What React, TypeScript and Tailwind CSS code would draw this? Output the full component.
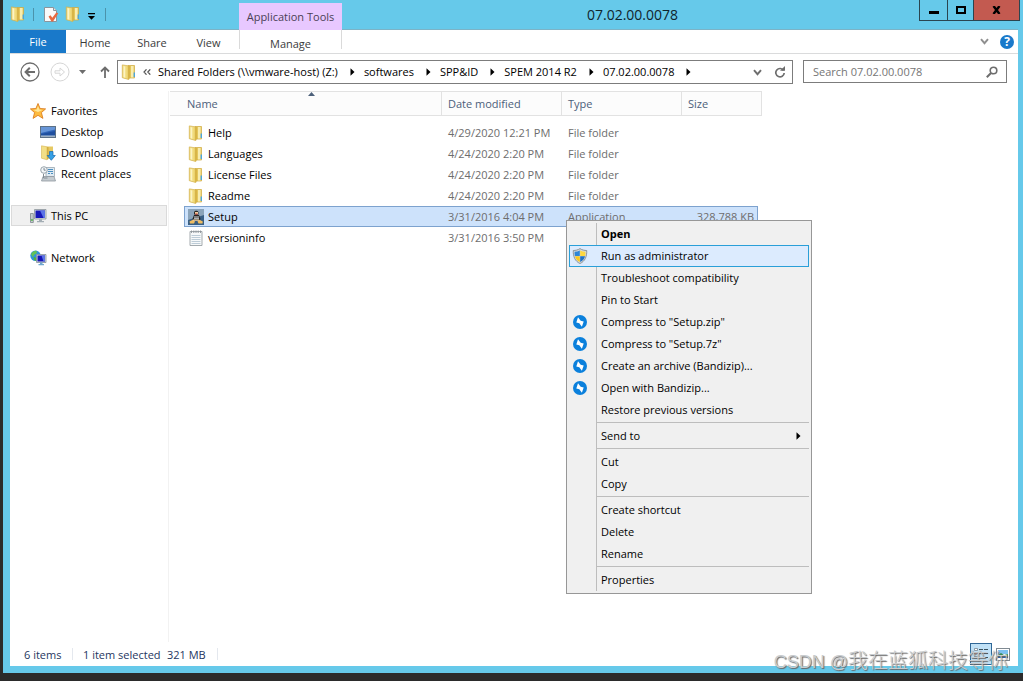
import React from "react"
import clsx from "clsx"

type IconProps = { className?: string }

const FolderIcon = ({ className }: IconProps) => (
	<svg viewBox="0 0 16 16" className={clsx("size-4 shrink-0", className)} aria-hidden="true">
		<path d="M7 1.500h6.500v12.500H7z" fill="#e9cc62" stroke="#cfa93f" strokeWidth=".7" />
		<path d="M10 2h2.500v11.500H10z" fill="#f8edb0" />
		<path d="M12.600 8.500H14v4.500h-1.400z" fill="#4aa6dc" />
		<path d="M1.300.9l6.500 1v13.600l-6.500-1.800z" fill="#f1db7c" stroke="#d2b04a" strokeWidth=".7" />
		<path d="M6.800 2h2.400v12l-2.400 1.400z" fill="#d8b548" />
		<path d="M2.500 2l1.800.4v11.400l-1.800-.5z" fill="#fcf4c4" />
	</svg>
)

const SheetCheckIcon = () => (
	<svg viewBox="0 0 16 17" className="h-[17px] w-4" aria-hidden="true">
		<path d="M1.500 1.500h9l3 3v11h-12z" fill="#fafafa" stroke="#8c959c" />
		<path d="M10.500 1.500v3h3" fill="#dfe4e8" stroke="#8c959c" />
		<path d="M5.500 10.500l2-1.200 1.800 2.500 4-5.300 2 .7-5.300 8.300h-1.500z" fill="#e8693f" />
	</svg>
)

const StarIcon = () => (
	<svg viewBox="0 0 16 16" className="size-4" aria-hidden="true">
		<path
			d="M8 .5l2.100 5 5.500.4-4.200 3.700 1.500 5.800L8 12.300 3.100 15.400l1.500-5.800L.4 5.900l5.500-.4z"
			fill="#fdbb3f"
			stroke="#dd7f22"
			strokeWidth=".9"
		/>
		<path d="M8 3l1.300 3.500 3.200.4-4.500 2-4.500-2 3.200-.4z" fill="#ffe79a" />
	</svg>
)

const DesktopIcon = () => (
	<svg viewBox="0 0 16 16" className="size-4" aria-hidden="true">
		<rect x=".5" y="2.500" width="15" height="11" fill="#3266b8" stroke="#5d7186" />
		<path d="M1 3h14v2.500L1 9z" fill="#6796d8" />
		<path d="M1 10l14-3v4H1z" fill="#1f4f9f" />
		<path d="M1 11.500h14V13H1z" fill="#9fb0c2" />
	</svg>
)

const DownloadsIcon = () => (
	<svg viewBox="0 0 16 16" className="size-4" aria-hidden="true">
		<path d="M7 1.500h6v12H7z" fill="#e6c963" />
		<path d="M1.500.8l5.500 1v13l-5.500-1.600z" fill="#f3df86" stroke="#d6b650" strokeWidth=".6" />
		<path d="M7 2h1.500v12L7 14.800z" fill="#d4ae3f" />
		<path d="M9.500 6.500h3.500v4h2.300L11.300 15.300 7.200 10.500h2.300z" fill="#35a0e6" stroke="#1769ad" strokeWidth=".7" />
	</svg>
)

const RecentIcon = () => (
	<svg viewBox="0 0 16 16" className="size-4" aria-hidden="true">
		<path d="M6 1.500h8.500v9H6z" fill="#dfeaf2" stroke="#9aa7b0" strokeWidth=".8" />
		<path d="M8 3.500h5M8 5.500h5M8 7.500h2M11 7.500h2" stroke="#4c8fc0" strokeWidth="1" />
		<path d="M3 10.500h11l1.500 4.500H1.500z" fill="#c4cbd0" stroke="#8f989f" strokeWidth=".8" />
		<path d="M3.500 8v4h4" fill="none" stroke="#838d94" />
		<circle cx="4" cy="4" r="3.300" fill="#f4f7f9" stroke="#8d9aa3" strokeWidth=".9" />
		<path d="M4 2v2.200h1.700" fill="none" stroke="#61707b" strokeWidth=".8" />
	</svg>
)

const ComputerIcon = () => (
	<svg viewBox="0 0 17 16" className="h-4 w-[17px]" aria-hidden="true">
		<path d="M.5 5.500h2.800v9H.5z" fill="#c5ccd0" stroke="#7c868c" strokeWidth=".8" />
		<path d="M1.200 11h1.500v2H1.200z" fill="#53b84b" />
		<path d="M4.500 1.500h11.500v9.500H4.500z" fill="#d9dee2" stroke="#8a949b" strokeWidth=".8" />
		<path d="M5.500 2.500h9.500v7.500H5.500z" fill="#1717b8" />
		<path d="M10 2.500h5v7.500h-1.500z" fill="#5b73e6" />
		<path d="M9 11.300h3v1.700h2v1.200H7V13h2z" fill="#a3adb4" />
	</svg>
)

const NetworkIcon = () => (
	<svg viewBox="0 0 17 16" className="h-4 w-[17px]" aria-hidden="true">
		<circle cx="5.500" cy="5.800" r="5.200" fill="#2f93dc" />
		<path d="M1 4.200c1.500-3 4-3.700 5.500-3.500L7 3 4 5 3 7.500z" fill="#63c354" />
		<path d="M4 7l3 1-1 3c-2-.3-3-2-2-4z" fill="#4fb244" />
		<path d="M6.500 4.500h9.500v8H6.500z" fill="#d9dee2" stroke="#87929a" strokeWidth=".8" />
		<path d="M7.500 5.500h7.500v6H7.500z" fill="#1717b8" />
		<path d="M11.500 5.500H15v6h-1.500z" fill="#5b73e6" />
		<path d="M10 12.500h2.500V14h1.500v1.300H8.500V14H10z" fill="#6fa7d0" />
	</svg>
)

const SetupIcon = () => (
	<svg viewBox="0 0 16 16" className="size-4" aria-hidden="true">
		<rect width="16" height="16" fill="#395f84" />
		<path d="M0 0h16v6L0 11z" fill="#8ba4ba" />
		<path d="M6 3.500c0-2.500 4.500-2.500 4.500 0v2H6z" fill="#2b2622" />
		<path d="M7 3h3v2H7z" fill="#efcfa0" />
		<path d="M7.300 4.500h2.200v1.200H7.300z" fill="#c43b2a" />
		<path d="M4.500 10l1.500-4h5l1.500 4-1 1.500h-6z" fill="#26231f" />
		<path d="M6 7.500h5v.9H6zM6 9.300h5v.9H6z" fill="#d9dfe4" />
		<path d="M1.500 12.500l3.500-1.700 2 1.700-1 2H2zM9.500 12.500l2-1.700 3.300 1.700-.3 2h-4z" fill="#f0bd62" />
		<path d="M5 10.500h6v1.300H5z" fill="#efcfa0" />
	</svg>
)

const NotepadIcon = () => (
	<svg viewBox="0 0 16 16" className="size-4" aria-hidden="true">
		<path d="M2 1.500h12v14H2z" fill="#f7f9fa" stroke="#9aa1a6" strokeWidth=".9" />
		<path d="M3.500 5.500h9M3.500 7.500h9M3.500 9.500h9M3.500 11.500h9M3.500 13.500h9" stroke="#b5c6d2" strokeWidth=".9" />
		<path d="M3.500.500v2.500M5.800.500v2.500M8 .500v2.500M10.200.500v2.500M12.500.500v2.500" stroke="#8c9398" strokeWidth=".9" />
	</svg>
)

const ShieldIcon = () => (
	<svg viewBox="0 0 16 16" className="size-4" aria-hidden="true">
		<path
			d="M8 .6C6 2 3.500 2.500 1.300 2.500c-.3 6 1.700 10.800 6.700 13 5-2.200 7-7 6.700-13C12.500 2.500 10 2 8 .6z"
			fill="#d5d9dc"
			stroke="#868c90"
			strokeWidth=".9"
		/>
		<path d="M7.800 2.400v5.500H2.900C2.600 6.600 2.500 5.300 2.600 3.800c2-.1 3.700-.6 5.200-1.400z" fill="#2f86d6" />
		<path d="M8.200 2.400v5.500h4.900c.3-1.300.4-2.600.3-4.100-2-.1-3.700-.6-5.200-1.400z" fill="#ffd83f" />
		<path d="M7.800 8.200v5.900C5.300 12.900 3.700 11 3 8.200z" fill="#fcc91e" />
		<path d="M8.200 8.200v5.900c2.500-1.200 4.100-3.100 4.800-5.900z" fill="#2272c4" />
	</svg>
)

const BandizipIcon = () => (
	<svg viewBox="0 0 14 14" className="size-3.5" aria-hidden="true">
		<circle cx="7" cy="7" r="7" fill="#0b80dc" />
		<path d="M5 2.200l2.700 3.500 3 .9L8.900 11.800 6.300 8.300l-3-.9z" fill="#fff" />
	</svg>
)

const Arrow = () => (
	<svg viewBox="0 0 5 8" className="h-2 w-[5px] shrink-0" aria-hidden="true">
		<path d="M.5.200L4.500 4l-4 3.800z" fill="currentColor" />
	</svg>
)

const Chevron = ({ className }: IconProps) => (
	<svg viewBox="0 0 9 7" className={clsx("h-[7px] w-[9px]", className)} aria-hidden="true">
		<path d="M1 1.200l3.500 4 3.500-4" fill="none" stroke="currentColor" strokeWidth="1.900" />
	</svg>
)

const Divider = () => <span className="h-[13px] w-px bg-[#4b93ab]" />

const TitleBar = () => (
	<header className="flex h-[30px] shrink-0 items-start border-b border-[#7cb3c6]">
		<div className="flex h-7 w-[229px] shrink-0 items-center">
			<FolderIcon />
			<div className="flex items-center pl-[7px]">
				<Divider />
				<button className="ml-[9px]" aria-label="Properties">
					<SheetCheckIcon />
				</button>
				<button className="ml-1.5" aria-label="New folder">
					<FolderIcon />
				</button>
				<button className="mt-1 mr-2.5 ml-[7px]" aria-label="Customize toolbar">
					<svg viewBox="0 0 7 7" className="size-[7px]" aria-hidden="true">
						<path d="M0 0h7v1.200H0zM0 3h7L3.500 6.800z" fill="#000" />
					</svg>
				</button>
				<Divider />
			</div>
		</div>
		<div className="mt-[3px] flex h-[27px] w-[103px] shrink-0 items-center justify-center bg-[#e8c8ff] text-[#4a3f55]">
			Application Tools
		</div>
		<h1 className="grow self-center pl-1 text-center text-sm text-[#10242c]">07.02.00.0078</h1>
		<div className="-mr-0.5 flex h-[21px] border border-t-0 border-[#2a4550]">
			<button className="flex w-7 items-center justify-center border-r border-[#2a4550]" aria-label="Minimize">
				<span className="mt-1 h-[3px] w-2.5 bg-black" />
			</button>
			<button className="flex w-[26px] items-center justify-center border-r border-[#2a4550]" aria-label="Maximize">
				<span className="h-2 w-2.5 border-2 border-black" />
			</button>
			<button className="flex w-[45px] items-center justify-center bg-[#c35a50]" aria-label="Close">
				<svg viewBox="0 0 9 8" className="h-2 w-[9px]" aria-hidden="true">
					<path d="M1.500 0l6 8M7.500 0l-6 8" stroke="#000" strokeWidth="2.400" />
				</svg>
			</button>
		</div>
	</header>
)

const Ribbon = () => (
	<nav className="flex h-6 shrink-0 items-stretch border-b border-[#dadbdc] bg-white text-[#3b3b3b]">
		<button className="w-14 bg-[#1979ca] text-white">File</button>
		<button className="w-[58px] pt-0.5">Home</button>
		<button className="w-14 pt-0.5">Share</button>
		<button className="w-[57px] pt-0.5">View</button>
		<button className="mb-1 ml-0.5 w-[103px] border-x border-[#dadada] pt-1.5">Manage</button>
		<div className="flex grow items-center justify-end gap-[11px] pr-1 text-[#8f8f8f]">
			<button aria-label="Minimize ribbon">
				<Chevron />
			</button>
			<button aria-label="Help" className="size-3.5 rounded-full bg-[#1979ca] text-xs leading-3.5 font-bold text-white">
				?
			</button>
		</div>
	</nav>
)

const crumbs = ["Shared Folders (\\\\vmware-host) (Z:)", "softwares", "SPP&ID", "SPEM 2014 R2", "07.02.00.0078"]

const AddressBar = () => (
	<div className="flex h-[37px] shrink-0 items-start pt-1.5 pr-[11px] pl-2.5">
		<div className="flex h-6 w-[97px] shrink-0 items-center text-[#6d6d6d]">
			<button aria-label="Back">
				<svg viewBox="0 0 20 20" className="size-5" aria-hidden="true">
					<circle cx="10" cy="10" r="9" fill="none" stroke="currentColor" strokeWidth="1.300" />
					<path d="M15 10H6M9.800 5.800L5.600 10l4.200 4.200" fill="none" stroke="currentColor" strokeWidth="2" />
				</svg>
			</button>
			<button className="ml-2.5 text-[#d6d6d6]" aria-label="Forward" disabled>
				<svg viewBox="0 0 20 20" className="size-5" aria-hidden="true">
					<circle cx="10" cy="10" r="9" fill="none" stroke="currentColor" />
					<path d="M5 8.800h5V6l4.500 4-4.500 4v-2.800H5z" fill="none" stroke="currentColor" />
				</svg>
			</button>
			<button className="ml-[9px]" aria-label="Recent locations">
				<svg viewBox="0 0 7 4" className="h-1 w-[7px]" aria-hidden="true">
					<path d="M0 0h7L3.500 4z" fill="currentColor" />
				</svg>
			</button>
			<button className="ml-3.5" aria-label="Up">
				<svg viewBox="0 0 10 12" className="h-3 w-2.5" aria-hidden="true">
					<path d="M5 12V1.500M1 5.500l4-4 4 4" fill="none" stroke="currentColor" strokeWidth="1.800" />
				</svg>
			</button>
		</div>
		<div className="flex h-6 grow items-center border border-[#7c7c7c] pr-1.5 pl-[3px]">
			<FolderIcon />
			<button className="w-[21px] pl-1.5 text-[#555]" aria-label="Parent folders">
				<svg viewBox="0 0 8 6" className="h-1.5 w-2" aria-hidden="true">
					<path d="M3.500.3L1 3l2.500 2.700M7.300.3L4.800 3l2.500 2.700" fill="none" stroke="currentColor" strokeWidth="1.200" />
				</svg>
			</button>
			<ol className="flex items-center text-black">
				{crumbs.map((crumb) => (
					<li key={crumb} className="flex items-center">
						<a href="#" className="pr-3">
							{crumb}
						</a>
						<span className="pr-[9px]">
							<Arrow />
						</span>
					</li>
				))}
			</ol>
			<div className="flex grow items-center justify-end gap-3 text-[#6d6d6d]">
				<button aria-label="Previous locations">
					<Chevron />
				</button>
				<button aria-label="Refresh">
					<svg viewBox="0 0 12 12" className="size-3" aria-hidden="true">
						<path d="M9.600 4.500A4.200 4.200 0 1 0 10.200 7" fill="none" stroke="currentColor" strokeWidth="1.700" />
						<path d="M6 4.700h5V0z" fill="currentColor" />
					</svg>
				</button>
			</div>
		</div>
		<div className="ml-2.5 flex h-[23px] w-[204px] shrink-0 items-center border border-[#7c7c7c] pr-2 pl-[9px]">
			<input
				type="search"
				aria-label="Search 07.02.00.0078"
				placeholder="Search 07.02.00.0078"
				className="min-w-0 grow outline-none placeholder:text-[#757575]"
			/>
			<svg viewBox="0 0 12 12" className="size-3 text-[#6d6d6d]" aria-hidden="true">
				<circle cx="7.500" cy="4.500" r="3.300" fill="none" stroke="currentColor" strokeWidth="1.600" />
				<path d="M5 7L.8 11.200" stroke="currentColor" strokeWidth="2" />
			</svg>
		</div>
	</div>
)

type PlaceProps = { icon: React.ReactNode; label: string; nested?: boolean; active?: boolean }

const Place = ({ icon, label, nested, active }: PlaceProps) => (
	<li>
		<a
			href="#"
			className={clsx(
				"mx-px flex h-[21px] items-center border",
				nested ? "pl-7" : "pl-[18px]",
				active ? "border-[#dadada] bg-[#f0f0f0]" : "border-transparent"
			)}
		>
			<span className="flex w-[21px]">{icon}</span>
			{label}
		</a>
	</li>
)

const Sidebar = () => (
	<aside className="w-[159px] shrink-0 border-r border-[#f2f2f2] pt-[9px]">
		<ul>
			<Place icon={<StarIcon />} label="Favorites" />
			<Place nested icon={<DesktopIcon />} label="Desktop" />
			<Place nested icon={<DownloadsIcon />} label="Downloads" />
			<Place nested icon={<RecentIcon />} label="Recent places" />
		</ul>
		<ul className="mt-[21px]">
			<Place active icon={<ComputerIcon />} label="This PC" />
		</ul>
		<ul className="mt-[21px]">
			<Place icon={<NetworkIcon />} label="Network" />
		</ul>
	</aside>
)

type FileRow = {
	name: string
	date: string
	type?: string
	size?: string
	icon: React.ReactNode
	selected?: boolean
}

const files: FileRow[] = [
	{ name: "Help", date: "4/29/2020 12:21 PM", type: "File folder", icon: <FolderIcon /> },
	{ name: "Languages", date: "4/24/2020 2:20 PM", type: "File folder", icon: <FolderIcon /> },
	{ name: "License Files", date: "4/24/2020 2:20 PM", type: "File folder", icon: <FolderIcon /> },
	{ name: "Readme", date: "4/24/2020 2:20 PM", type: "File folder", icon: <FolderIcon /> },
	{ name: "Setup", date: "3/31/2016 4:04 PM", type: "Application", size: "328,788 KB", icon: <SetupIcon />, selected: true },
	{ name: "versioninfo", date: "3/31/2016 3:50 PM", icon: <NotepadIcon /> },
]

const FileTable = () => (
	<table className="ml-px w-[592px] table-fixed border-separate border-spacing-0 self-start text-left">
		<colgroup>
			<col className="w-3.5" />
			<col className="w-[258px]" />
			<col className="w-[120px]" />
			<col className="w-[120px]" />
			<col className="w-[76px]" />
			<col className="w-1" />
		</colgroup>
		<thead>
			<tr className="h-[25px] text-[#4c607a] *:border-y *:border-r *:border-[#e2e2e2] *:bg-[#fcfcfc] *:p-0 *:font-normal">
				<th colSpan={2}>
					<div className="flex h-[23px] items-center pl-[17px]">
						<span className="w-[121px]">Name</span>
						<svg viewBox="0 0 7 4" className="h-1 w-[7px] self-start" aria-label="Sorted ascending">
							<path d="M0 4h7L3.500 0z" fill="currentColor" />
						</svg>
					</div>
				</th>
				<th>
					<span className="pl-1.5">Date modified</span>
				</th>
				<th>
					<span className="pl-1.5">Type</span>
				</th>
				<th colSpan={2}>
					<span className="pl-1.5">Size</span>
				</th>
			</tr>
		</thead>
		<tbody className="text-[#6d6d6d] before:block before:h-1.5">
			{files.map((file) => (
				<tr
					key={file.name}
					className={clsx(
						"h-[21px] *:p-0",
						file.selected && "[&>.cell]:border-y [&>.cell]:border-[#7da2ce] [&>.cell]:bg-[#cde2fb]"
					)}
				>
					<td />
					<td className={clsx("cell", file.selected && "border-l")}>
						<div className={clsx("flex items-center gap-1 text-black", file.selected ? "pl-[3px]" : "pl-1")}>
							{file.icon}
							{file.name}
						</div>
					</td>
					<td className="cell">
						<span className="pl-1.5">{file.date}</span>
					</td>
					<td className="cell">
						<span className="pl-1.5">{file.type}</span>
					</td>
					<td className={clsx("cell text-right", file.selected && "border-r")}>
						<span className="pr-[3px]">{file.size}</span>
					</td>
					<td />
				</tr>
			))}
		</tbody>
	</table>
)

type MenuItem = { label: string; icon?: React.ReactNode; bold?: boolean; hovered?: boolean; submenu?: boolean }

const menuGroups: MenuItem[][] = [
	[
		{ label: "Open", bold: true },
		{ label: "Run as administrator", icon: <ShieldIcon />, hovered: true },
		{ label: "Troubleshoot compatibility" },
		{ label: "Pin to Start" },
		{ label: 'Compress to "Setup.zip"', icon: <BandizipIcon /> },
		{ label: 'Compress to "Setup.7z"', icon: <BandizipIcon /> },
		{ label: "Create an archive (Bandizip)...", icon: <BandizipIcon /> },
		{ label: "Open with Bandizip...", icon: <BandizipIcon /> },
		{ label: "Restore previous versions" },
	],
	[{ label: "Send to", submenu: true }],
	[{ label: "Cut" }, { label: "Copy" }],
	[{ label: "Create shortcut" }, { label: "Delete" }, { label: "Rename" }],
	[{ label: "Properties" }],
]

const ContextMenu = () => (
	<div
		role="menu"
		className="absolute top-[220px] left-[566px] w-[246px] border border-[#979797] bg-[#f0f0f0] p-0.5 text-black"
	>
		{menuGroups.map((group, index) => (
			<React.Fragment key={group[0].label}>
				{index > 0 && (
					<div role="separator" className="ml-[27px] h-1 border-l border-[#bdbdbd] pt-px">
						<div className="h-px bg-[#bdbdbd]" />
					</div>
				)}
				{group.map((item) => (
					<button
						key={item.label}
						role="menuitem"
						className={clsx(
							"flex h-[22px] w-full items-center text-left",
							item.bold && "font-bold",
							item.hovered && "bg-[#dcebfe] outline-1 -outline-offset-1 outline-[#2a9fd8]"
						)}
					>
						<span
							className={clsx(
								"flex h-full w-7 items-center justify-center border-r pr-1.5",
								item.hovered ? "border-transparent" : "border-[#bdbdbd]"
							)}
						>
							{item.icon}
						</span>
						<span className="grow pl-1">{item.label}</span>
						{item.submenu && (
							<span className="pr-2">
								<Arrow />
							</span>
						)}
					</button>
				))}
			</React.Fragment>
		))}
	</div>
)

const StatusBar = () => (
	<footer className="flex h-6 shrink-0 items-center pl-3.5 text-[#1e3660]">
		<span className="w-12 pt-0.5">6 items</span>
		<span className="h-3 w-px bg-[#e4e8ee]" />
		<span className="w-[86px] pt-0.5 pl-2.5 whitespace-nowrap">1 item selected</span>
		<span className="w-[58px] pt-0.5 pl-2 whitespace-nowrap">321 MB</span>
		<span className="h-3 w-px bg-[#e4e8ee]" />
		<div className="flex grow items-center justify-end gap-1 pr-2">
			<button className="flex size-[22px] items-center justify-center border border-[#2f6797] bg-[#c0e1f6]" aria-label="Details view">
				<svg viewBox="0 0 16 14" className="h-3.5 w-4" aria-hidden="true">
					<path d="M1.500 1.500h3v2h-3zM1.500 5.500h3v2h-3zM1.500 9.500h3v2h-3z" fill="#fff" stroke="#7a8790" strokeWidth=".8" />
					<path d="M6 2.500h4M11 2.500h4M6 6.500h4M11 6.500h4M6 10.500h4M11 10.500h4" stroke="#39515f" />
					<path d="M2.500 6h1v1h-1z" fill="#d64a34" />
				</svg>
			</button>
			<button aria-label="Large icons view">
				<svg viewBox="0 0 14 13" className="h-[13px] w-3.5" aria-hidden="true">
					<rect x=".5" y=".5" width="13" height="12" fill="#fff" stroke="#7f8a92" />
					<path d="M2 2h10v4H2z" fill="#7cc1f0" />
					<path d="M2 7l3-2 3 2 4-1v4H2z" fill="#3a8a57" />
					<path d="M2 8.500h10V10H2z" fill="#2a5fae" />
				</svg>
			</button>
		</div>
	</footer>
)

export default function App() {
	return (
		<div className="relative flex h-screen w-full flex-col bg-[#2b2b2b] pb-2 pl-[3px] font-['Open_Sans','Noto_Sans',sans-serif] text-[11px] leading-4">
			<div className="flex min-h-0 grow flex-col bg-[#66c9ea] pr-[5px] pb-[7px] pl-[7px]">
				<TitleBar />
				<main className="flex min-h-0 grow flex-col bg-white">
					<Ribbon />
					<AddressBar />
					<div className="flex min-h-0 grow">
						<Sidebar />
						<FileTable />
					</div>
					<StatusBar />
				</main>
			</div>
			<ContextMenu />
			<p className="pointer-events-none absolute right-[15px] bottom-[5px] font-['Liberation_Sans','Noto_Sans_CJK_SC',sans-serif] text-xl leading-7 font-light text-[#c9ccce] [text-shadow:1px_1px_1px_#666]">
				<span className="text-lg">CSDN @</span>我在蓝狐科技等你
			</p>
		</div>
	)
}
